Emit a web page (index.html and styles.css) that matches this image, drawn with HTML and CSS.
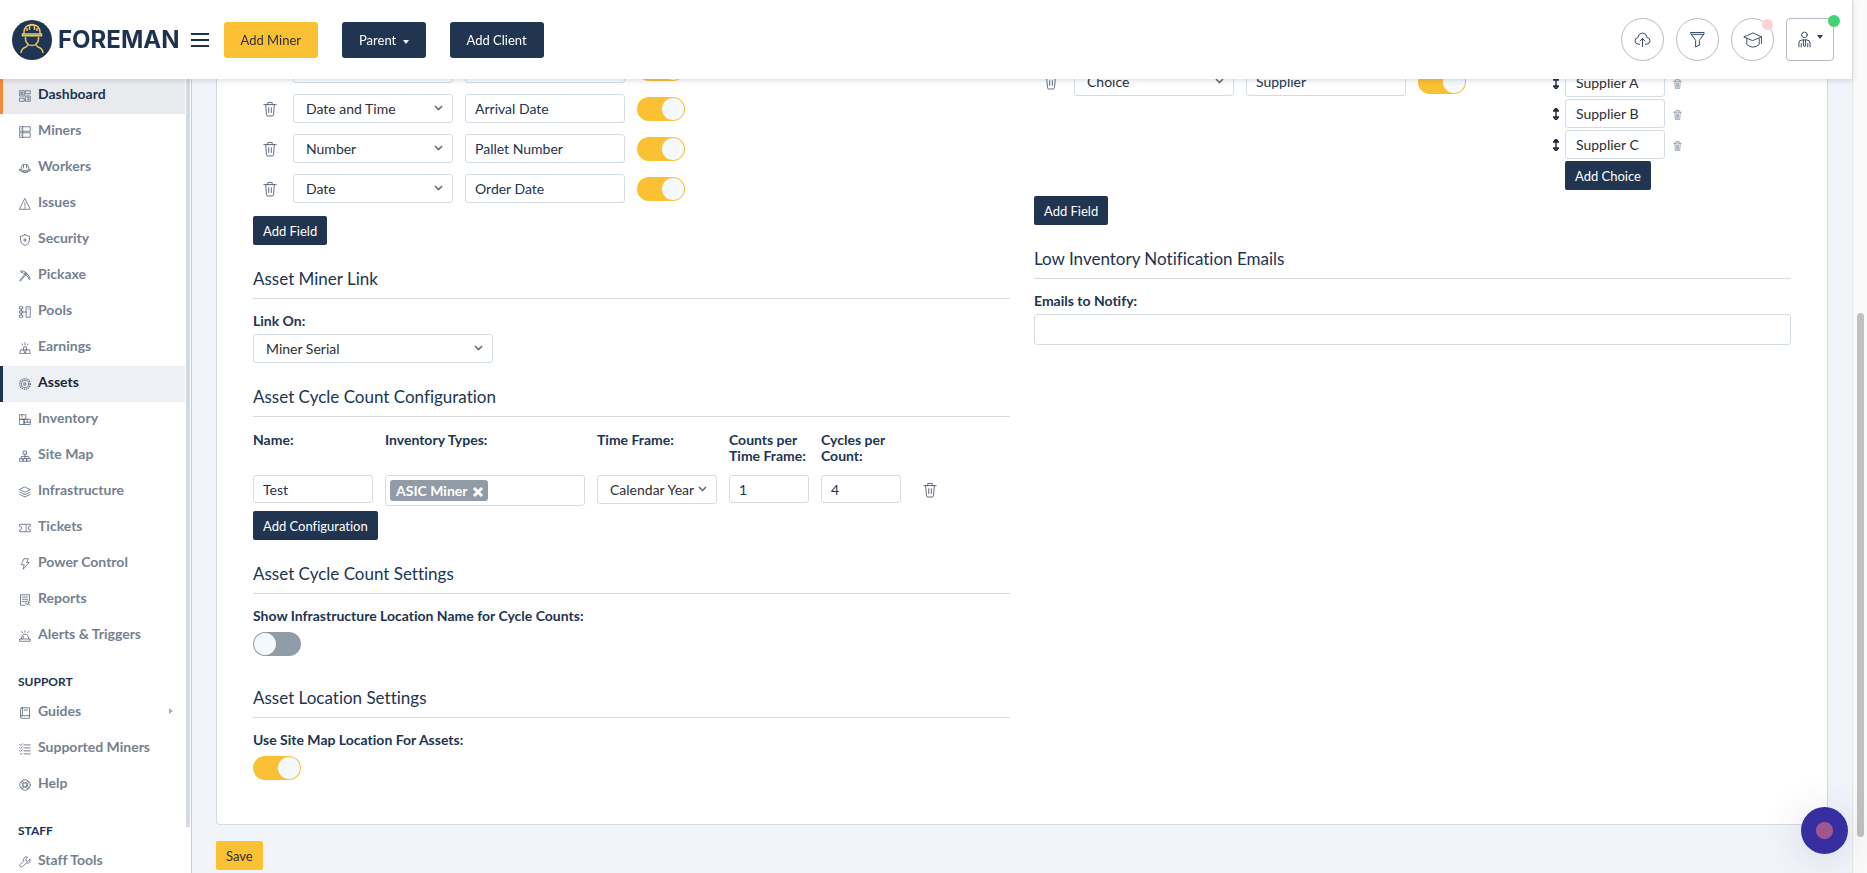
FILE: index.html
```html
<!DOCTYPE html>
<html lang="en">
<head>
    <meta charset="UTF-8">
    <meta name="viewport" content="width=device-width, initial-scale=1.0">
    <title>Foreman - Assets</title>
    <link rel="stylesheet" href="styles.css">
</head>
<body>

<!-- icon sprite -->
<svg class="sprite" aria-hidden="true">
    <symbol id="i-trash" viewBox="0 0 16 18"><path d="M1 4h14M5.5 4V1.500h5V4M3 4l1 11.500q.2 1.500 1.500 1.500h5q1.300 0 1.500-1.500L13 4M6.500 7.500v5.500M9.500 7.500v5.500"/></symbol>
    <symbol id="i-trash-sm" viewBox="0 0 16 18"><path d="M1 4h14M5 4V1h6v3M3 4l1 13h8l1-13M6 7v8M8 7v8M10 7v8"/></symbol>
    <symbol id="i-updown" viewBox="0 0 6 12"><path d="M3 2v8"/><path class="fill" d="M3 0l2.500 3h-5zM3 12l2.500-3h-5z"/></symbol>
    <symbol id="i-dashboard" viewBox="0 0 16 16"><path d="M1 1h6v7H1zM9 1h6v4H9zM9 8h6v7H9zM1 11h6v4H1zM3 3h2v3H3zM11 10h2v3h-2"/></symbol>
    <symbol id="i-miners" viewBox="0 0 16 16"><path d="M1 1h14v6H1zM1 9h14v6H1zM5 1v6M5 9v6M2.500 4h1M2.500 12h1"/></symbol>
    <symbol id="i-workers" viewBox="0 0 16 16"><path d="M3 10V8a5 5 0 0 1 10 0v2M1 10q7 3.500 14 0v1.500q-7 4-14 0zM6 4v4M10 4v4M4 13q4 3 8 0"/></symbol>
    <symbol id="i-issues" viewBox="0 0 16 16"><path d="M8 1l7 14H1zM8 6v5M8 12.500v1"/></symbol>
    <symbol id="i-security" viewBox="0 0 16 16"><path d="M8 1q3 2 6 2v5q0 5-6 7.500Q2 13 2 8V3q3 0 6-2zM8 6v4M6 8h4"/></symbol>
    <symbol id="i-pickaxe" viewBox="0 0 16 16"><path d="M3 1q8 0 12 11l-1 1Q10 5 3 3zM10 5l-8 10-1-1L9 4M8 3l5 5"/></symbol>
    <symbol id="i-pools" viewBox="0 0 16 16"><path d="M1 1h4v3H1zM1 6.500h4v3H1zM1 12h4v3H1zM10 1h5v14h-5zM12 4h1M5 8h5M3 4v2.500M3 9.500V12"/></symbol>
    <symbol id="i-earnings" viewBox="0 0 16 16"><path d="M5.500 10l1-3.500h3l1 3.500zM1 15l1-4.500h4.500l1 4.500zM8.500 15l1-4.500H14l1 4.500zM8 1v3M4 2.500l1 2M12 2.500l-1 2"/></symbol>
    <symbol id="i-assets" viewBox="0 0 16 16"><circle cx="8" cy="8" r="7" stroke-width="2" stroke-linecap="butt" stroke-dasharray="1.200 1.550"/><circle cx="8" cy="8" r="5"/><path d="M7 6.500h2v3H7z"/></symbol>
    <symbol id="i-inventory" viewBox="0 0 16 16"><path d="M1 1h8v6H1zM1 7h6v7H1zM7 7h8v7H7zM4 1v3M11 7v3M7 11h8"/></symbol>
    <symbol id="i-sitemap" viewBox="0 0 16 16"><path d="M6 1.500h4v4H6zM8 5.500v6M3 11.500V8.500h10v3M1 11.500h4V15H1zM6 11.500h4V15H6zM11 11.500h4V15h-4z"/></symbol>
    <symbol id="i-infra" viewBox="0 0 16 16"><path d="M8 1.500l7 3.300-7 3.400-7-3.400zM1 8l7 3.400L15 8M1 11.200l7 3.400 7-3.400"/></symbol>
    <symbol id="i-tickets" viewBox="0 0 16 16"><path d="M1 3h14v2.500q-2.500 0-2.500 2.500t2.500 2.500V13H1v-2.500q2.500 0 2.500-2.500T1 5.500zM9.500 4v1.500M9.500 7v2M9.500 10.500V12"/></symbol>
    <symbol id="i-power" viewBox="0 0 16 16"><path d="M7 1h5.500L10 6h3.500L5.500 15 7 9H3.500z"/></symbol>
    <symbol id="i-reports" viewBox="0 0 16 16"><path d="M14 9V1H2v14h6M4.500 4h7M4.500 7h7M4.500 10h3"/><circle cx="11" cy="11.500" r="2.200"/><path d="M12.500 13l2 2"/></symbol>
    <symbol id="i-alerts" viewBox="0 0 16 16"><path d="M3 12l1-4q1-2.500 4-2.500T12 8l1 4M1 12h14v3H1zM8 1v2M3.500 2l1.200 2M12.500 2l-1.200 2M6 8.500L5.500 11"/></symbol>
    <symbol id="i-guides" viewBox="0 0 16 16"><path d="M4 1h10v14H4q-2 0-2-2V3q0-2 2-2zM2 13q0-1.500 2-1.500h10M4.500 1v10.500M7 4h4.500"/></symbol>
    <symbol id="i-list" viewBox="0 0 16 16"><path d="M6.500 2.500H15M6.500 6.500H15M6.500 10.500H15M6.500 14.500H15M1 2l1.200 1.200L4.500 1M1 6l1.200 1.200L4.500 5M1 10l1.200 1.200L4.500 9M2 14.500h1.500"/></symbol>
    <symbol id="i-help" viewBox="0 0 16 16"><circle cx="8" cy="8" r="7"/><circle cx="8" cy="8" r="3.200"/><path d="M3 4.500L5.500 7M4.500 3L7 5.500M13 4.500L10.500 7M11.500 3L9 5.500M3 11.500L5.500 9M4.500 13L7 10.500M13 11.500L10.500 9M11.500 13L9 10.500"/></symbol>
    <symbol id="i-wrench" viewBox="0 0 16 16"><path d="M14.500 4.500L12 7 9.500 6.500 9 4l2.500-2.500Q8.500.500 6.500 3 5.500 4.500 6.200 6.500L1.500 11.500q-1 1.500.300 2.700 1.300 1 2.700 0L9.500 9.500q3 .8 4.700-1.200 1.200-1.800.3-3.800z"/></symbol>
    <symbol id="i-cloud" viewBox="0 0 18 16"><path d="M6 13H4.500Q1 12.500 1 9.500T4 6q.5-4.500 5-5 4.500.5 5 5 3 .5 3 3.500T13.500 13H12M9 15.500V7M6.500 9.500L9 7l2.500 2.500"/></symbol>
    <symbol id="i-filter" viewBox="0 0 16 18"><path d="M1 1.500h14v1.500L10 10v5l-4 2v-7L1 3zM1.500 3.500h13"/></symbol>
    <symbol id="i-cap" viewBox="0 0 22 18"><path d="M1 5.500L11 1l9.500 4.500L11 9.500zM4 7.500V14q3.500 3 7 3t7-3V7.500M20.500 5.500V13"/></symbol>
    <symbol id="i-user" viewBox="0 0 14 18"><circle cx="7" cy="4" r="3"/><path d="M1 17v-4q0-3.500 3.500-3.500h5q3.500 0 3.500 3.500v4M3.500 17v-3.500M10.500 17v-3.500M5.800 9.500v5.500L7 17l1.200-2V9.500"/></symbol>
</svg>

<header class="topbar">
    <a class="brand" href="#">
        <svg class="brand-mark" viewBox="0 0 40 40" aria-hidden="true">
            <circle cx="20" cy="20" r="20"/>
            <path d="M12 14v-2q.5-7 8-7.500 7.500.5 8 7.500v2M10.500 14h19v1.800h-19zM17.500 10V6q2.500-2 5 0v4M15 11V8M25 11V8M13.500 17q-.5 5 3 7.500 3.500 2 7 0 3.500-2.500 3-7.500M9 33q.3-4.500 5-6l2.500-2.500M31 33q-.3-4.500-5-6l-2.500-2.500"/>
        </svg>
        <span class="brand-name">FOREMAN</span>
    </a>
    <button type="button" class="menu-toggle" aria-label="Toggle menu"><span></span><span></span><span></span></button>
    <div class="topbar-actions">
        <button type="button" class="btn btn-lg btn-warning">Add Miner</button>
        <button type="button" class="btn btn-lg">Parent <span class="caret"></span></button>
        <button type="button" class="btn btn-lg">Add Client</button>
    </div>
    <div class="topbar-icons">
        <button type="button" class="round" aria-label="Upload"><svg class="icon" width="17" height="15"><use href="#i-cloud"/></svg></button>
        <button type="button" class="round" aria-label="Filter"><svg class="icon" width="15" height="17"><use href="#i-filter"/></svg></button>
        <button type="button" class="round" aria-label="Training"><svg class="icon" width="20" height="16"><use href="#i-cap"/></svg><i class="dot dot-pink"></i></button>
        <button type="button" class="round user" aria-label="Account"><svg class="icon" width="13" height="17"><use href="#i-user"/></svg><span class="caret"></span><i class="dot dot-green"></i></button>
    </div>
</header>

<div class="layout">
    <nav class="sidebar">
        <a class="nav-item current" href="#"><svg class="icon"><use href="#i-dashboard"/></svg>Dashboard</a>
        <a class="nav-item" href="#"><svg class="icon"><use href="#i-miners"/></svg>Miners</a>
        <a class="nav-item" href="#"><svg class="icon"><use href="#i-workers"/></svg>Workers</a>
        <a class="nav-item" href="#"><svg class="icon"><use href="#i-issues"/></svg>Issues</a>
        <a class="nav-item" href="#"><svg class="icon"><use href="#i-security"/></svg>Security</a>
        <a class="nav-item" href="#"><svg class="icon"><use href="#i-pickaxe"/></svg>Pickaxe</a>
        <a class="nav-item" href="#"><svg class="icon"><use href="#i-pools"/></svg>Pools</a>
        <a class="nav-item" href="#"><svg class="icon"><use href="#i-earnings"/></svg>Earnings</a>
        <a class="nav-item active" href="#"><svg class="icon"><use href="#i-assets"/></svg>Assets</a>
        <a class="nav-item" href="#"><svg class="icon"><use href="#i-inventory"/></svg>Inventory</a>
        <a class="nav-item" href="#"><svg class="icon"><use href="#i-sitemap"/></svg>Site Map</a>
        <a class="nav-item" href="#"><svg class="icon"><use href="#i-infra"/></svg>Infrastructure</a>
        <a class="nav-item" href="#"><svg class="icon"><use href="#i-tickets"/></svg>Tickets</a>
        <a class="nav-item" href="#"><svg class="icon"><use href="#i-power"/></svg>Power Control</a>
        <a class="nav-item" href="#"><svg class="icon"><use href="#i-reports"/></svg>Reports</a>
        <a class="nav-item" href="#"><svg class="icon"><use href="#i-alerts"/></svg>Alerts &amp; Triggers</a>
        <h6 class="nav-title">SUPPORT</h6>
        <a class="nav-item" href="#"><svg class="icon"><use href="#i-guides"/></svg>Guides<span class="more"></span></a>
        <a class="nav-item" href="#"><svg class="icon"><use href="#i-list"/></svg>Supported Miners</a>
        <a class="nav-item" href="#"><svg class="icon"><use href="#i-help"/></svg>Help</a>
        <h6 class="nav-title">STAFF</h6>
        <a class="nav-item" href="#"><svg class="icon"><use href="#i-wrench"/></svg>Staff Tools</a>
        <span class="sidebar-thumb"></span>
    </nav>

    <main class="content">
        <form>
            <div class="card">
                <div class="col">
                    <div class="field-row">
                        <button type="button" class="trash" aria-label="Remove field"><svg class="icon"><use href="#i-trash"/></svg></button>
                        <select class="control" aria-label="Field type"><option></option></select>
                        <input class="control" type="text" aria-label="Field name">
                        <input class="switch" type="checkbox" aria-label="Enabled" checked>
                    </div>
                    <div class="field-row">
                        <button type="button" class="trash" aria-label="Remove field"><svg class="icon"><use href="#i-trash"/></svg></button>
                        <select class="control" aria-label="Field type"><option>Date and Time</option></select>
                        <input class="control" type="text" aria-label="Field name" value="Arrival Date">
                        <input class="switch" type="checkbox" aria-label="Enabled" checked>
                    </div>
                    <div class="field-row">
                        <button type="button" class="trash" aria-label="Remove field"><svg class="icon"><use href="#i-trash"/></svg></button>
                        <select class="control" aria-label="Field type"><option>Number</option></select>
                        <input class="control" type="text" aria-label="Field name" value="Pallet Number">
                        <input class="switch" type="checkbox" aria-label="Enabled" checked>
                    </div>
                    <div class="field-row">
                        <button type="button" class="trash" aria-label="Remove field"><svg class="icon"><use href="#i-trash"/></svg></button>
                        <select class="control" aria-label="Field type"><option>Date</option></select>
                        <input class="control" type="text" aria-label="Field name" value="Order Date">
                        <input class="switch" type="checkbox" aria-label="Enabled" checked>
                    </div>
                    <button type="button" class="btn">Add Field</button>

                    <h4>Asset Miner Link</h4>
                    <label for="linkOn">Link On:</label>
                    <select class="control link-on" id="linkOn"><option>Miner Serial</option></select>

                    <h4>Asset Cycle Count Configuration</h4>
                    <div class="cycle-grid">
                        <label for="cfgName">Name:</label>
                        <label for="cfgTypes">Inventory Types:</label>
                        <label for="cfgFrame">Time Frame:</label>
                        <label for="cfgCounts">Counts per Time Frame:</label>
                        <label for="cfgCycles">Cycles per Count:</label>
                        <span></span>
                        <input class="control short" type="text" id="cfgName" value="Test">
                        <div class="control tags">
                            <span class="tag">ASIC Miner <button type="button" aria-label="Remove ASIC Miner"><svg viewBox="0 0 12 12"><path d="M2 2l8 8M10 2l-8 8"/></svg></button></span>
                            <input type="text" id="cfgTypes">
                        </div>
                        <select class="control" id="cfgFrame"><option>Calendar Year</option></select>
                        <input class="control short" type="text" id="cfgCounts" value="1">
                        <input class="control short" type="text" id="cfgCycles" value="4">
                        <button type="button" class="trash" aria-label="Remove configuration"><svg class="icon"><use href="#i-trash"/></svg></button>
                    </div>
                    <button type="button" class="btn">Add Configuration</button>

                    <h4>Asset Cycle Count Settings</h4>
                    <label for="showInfra">Show Infrastructure Location Name for Cycle Counts:</label>
                    <input class="switch setting" type="checkbox" id="showInfra">

                    <h4>Asset Location Settings</h4>
                    <label for="useSiteMap">Use Site Map Location For Assets:</label>
                    <input class="switch setting" type="checkbox" id="useSiteMap" checked>
                </div>

                <div class="col col-right">
                    <div class="field-row with-choices">
                        <button type="button" class="trash" aria-label="Remove field"><svg class="icon"><use href="#i-trash"/></svg></button>
                        <select class="control" aria-label="Field type"><option>Choice</option></select>
                        <input class="control" type="text" aria-label="Field name" value="Supplier">
                        <input class="switch" type="checkbox" aria-label="Enabled" checked>
                        <div class="choices">
                            <div class="choice">
                                <svg class="icon updown"><use href="#i-updown"/></svg>
                                <input class="control" type="text" aria-label="Choice" value="Supplier A">
                                <button type="button" class="trash-sm" aria-label="Remove choice"><svg class="icon"><use href="#i-trash-sm"/></svg></button>
                            </div>
                            <div class="choice">
                                <svg class="icon updown"><use href="#i-updown"/></svg>
                                <input class="control" type="text" aria-label="Choice" value="Supplier B">
                                <button type="button" class="trash-sm" aria-label="Remove choice"><svg class="icon"><use href="#i-trash-sm"/></svg></button>
                            </div>
                            <div class="choice">
                                <svg class="icon updown"><use href="#i-updown"/></svg>
                                <input class="control" type="text" aria-label="Choice" value="Supplier C">
                                <button type="button" class="trash-sm" aria-label="Remove choice"><svg class="icon"><use href="#i-trash-sm"/></svg></button>
                            </div>
                            <button type="button" class="btn">Add Choice</button>
                        </div>
                    </div>
                    <button type="button" class="btn">Add Field</button>

                    <h4>Low Inventory Notification Emails</h4>
                    <label for="emails">Emails to Notify:</label>
                    <input class="control emails" type="text" id="emails">
                </div>
            </div>
            <button type="submit" class="btn btn-warning">Save</button>
        </form>
    </main>

    <div class="rail"><span class="rail-thumb"></span></div>
</div>

<button type="button" class="chat" aria-label="Open chat"></button>
</body>
</html>
```

FILE: styles.css
```css
* {
    box-sizing: border-box;
}
body {
    margin: 0;
    background: #f1f4f9;
    color: #213450;
    font-family: Lato, "Open Sans", sans-serif;
    font-size: 14px;
    line-height: 20px;
    font-variant-ligatures: none;
}
button, input, select {
    font: inherit;
    margin: 0;
}
button {
    cursor: pointer;
}
.sprite {
    display: none;
}
.icon {
    fill: none;
    stroke: currentColor;
    stroke-width: 1;
    stroke-linejoin: round;
    stroke-linecap: round;
}
.icon .fill {
    fill: currentColor;
    stroke: none;
}

/* top bar */
.topbar {
    position: fixed;
    top: 0;
    left: 0;
    right: 15px;
    z-index: 10;
    height: 79px;
    padding: 0 18px 0 12px;
    display: flex;
    align-items: center;
    background: #fff;
    box-shadow: 0 1px 6px rgba(40, 50, 70, 0.2);
}
.brand {
    display: flex;
    align-items: center;
    gap: 6px;
    color: #1e3250;
    text-decoration: none;
}
.brand-mark {
    width: 40px;
    height: 40px;
    fill: none;
    stroke: #f0c862;
    stroke-width: 1.4;
}
.brand-mark circle {
    fill: #1f3554;
    stroke: none;
}
.brand-name {
    font-family: Inter, sans-serif;
    font-size: 24px;
    font-weight: 700;
    line-height: 28px;
}
.menu-toggle {
    display: flex;
    flex-direction: column;
    gap: 4px;
    width: 18px;
    margin: 0 15px 0 11px;
    padding: 0;
    border: 0;
    background: none;
}
.menu-toggle span {
    height: 2px;
    background: #1e3250;
}
.topbar-actions {
    display: flex;
    gap: 24px;
}
.topbar-icons {
    display: flex;
    gap: 12px;
    margin-left: auto;
}
.round {
    position: relative;
    display: flex;
    align-items: center;
    justify-content: center;
    width: 43px;
    height: 43px;
    padding: 0;
    border: 1px solid #b4bac3;
    border-radius: 50%;
    background: #fff;
    color: #2c3d57;
}
.user {
    width: 48px;
    border-radius: 4px;
    gap: 6px;
}
.dot {
    position: absolute;
    border-radius: 50%;
}
.dot-pink {
    top: 0;
    right: 0;
    width: 11px;
    height: 11px;
    background: #fbd3d6;
}
.dot-green {
    top: -4px;
    right: -7px;
    width: 12px;
    height: 12px;
    background: #43d477;
}
.caret {
    display: inline-block;
    margin-left: 3px;
    border: 3px solid transparent;
    border-top: 4px solid currentColor;
    border-bottom: 0;
    vertical-align: 1px;
}
.user .caret {
    margin: 0 0 6px;
}

/* buttons */
.btn {
    display: block;
    height: 29px;
    padding: 0 10px;
    border: 0;
    border-radius: 2px;
    background: #213450;
    color: #fff;
    font-size: 13px;
    white-space: nowrap;
}
.btn-lg {
    height: 36px;
    padding: 0 17px;
    border-radius: 3px;
}
.btn-warning {
    background: #fbc134;
    color: #2f2f33;
}

/* side bar */
.layout {
    display: flex;
    min-height: 100vh;
}
.sidebar {
    position: sticky;
    top: 0;
    flex: 0 0 192px;
    height: 100vh;
    padding-top: 78px;
    padding-right: 6px;
    border-right: 1px solid #c5cdd6;
    background: #fff;
    overflow: hidden;
}
.nav-item {
    display: flex;
    align-items: center;
    gap: 7px;
    height: 36px;
    padding: 0 12px 4px 16px;
    border-left: 3px solid transparent;
    color: #76808f;
    font-weight: 700;
    text-decoration: none;
}
.nav-item .icon {
    width: 12px;
    height: 12px;
    margin-top: 4px;
    color: #4f5c73;
}
.nav-item.current {
    border-left-color: #f5893b;
    background: #e9eaee;
    color: #213450;
}
.nav-item.active {
    border-left-color: #213450;
    background: #edf1f5;
    color: #1c2430;
}
.nav-title {
    height: 41px;
    margin: 0;
    padding: 18px 0 0 18px;
    font-size: 12px;
    font-weight: 700;
}
.more {
    margin-left: auto;
    border: 3px solid transparent;
    border-left: 4px solid #a9b0ba;
    border-right: 0;
}
.sidebar-thumb {
    position: absolute;
    top: 79px;
    right: 1px;
    bottom: 46px;
    width: 4px;
    background: #d3dae1;
}

/* content */
.content {
    flex: 1;
    min-width: 0;
    padding: 0 24px 2px;
}
.card {
    display: grid;
    grid-template-columns: 1fr 1fr;
    gap: 24px;
    margin-bottom: 16px;
    padding: 54px 36px 14px;
    border: 1px solid #d3dae3;
    border-top: 0;
    border-radius: 0 0 4px 4px;
    background: #fff;
}
.col-right {
    padding-top: 13px;
}
h4 {
    margin: 22px 0 12px;
    padding-bottom: 7px;
    border-bottom: 1px solid #d6dde2;
    font-size: 17px;
    font-weight: 400;
    line-height: 24px;
}
label {
    display: block;
    margin-bottom: 3px;
    font-weight: 700;
}
.control {
    display: block;
    width: 100%;
    height: 29px;
    padding: 0 9px;
    border: 1px solid #d3dde3;
    border-radius: 3px;
    background: #fff;
    color: #213450;
}
select.control {
    appearance: none;
    padding-left: 12px;
    background: #fff url("data:image/svg+xml,%3Csvg xmlns='http://www.w3.org/2000/svg' width='9' height='7'%3E%3Cpath d='M1 1l3.500 3.500L8 1' fill='none' stroke='%23666e78' stroke-width='1.600'/%3E%3C/svg%3E") no-repeat right 9px top 10px;
    color: #2d2f36;
}
.control.short {
    height: 28px;
}
.control.link-on {
    width: 240px;
}
.control.emails {
    height: 31px;
}
.field-row {
    display: grid;
    grid-template-columns: 18px 160px 160px 48px;
    gap: 12px;
    align-items: center;
    margin-bottom: 11px;
    padding-left: 10px;
}
.field-row + .btn {
    margin-top: 13px;
}
.with-choices {
    grid-template-columns: 18px 160px 160px 122px auto;
    align-items: start;
    margin-bottom: 6px;
}
.with-choices + .btn {
    margin-top: 0;
}
.trash {
    display: flex;
    align-items: center;
    width: 14px;
    height: 29px;
    padding: 0;
    border: 0;
    background: none;
    color: #4b5870;
}
.trash .icon {
    width: 14px;
    height: 16px;
}
.switch {
    appearance: none;
    display: block;
    width: 48px;
    height: 24px;
    padding: 1px;
    border-radius: 12px;
    background: #919ca9;
    cursor: pointer;
}
.switch::before {
    content: "";
    display: block;
    width: 22px;
    height: 22px;
    border-radius: 50%;
    background: #f4f9fd;
}
.switch:checked {
    background: #fbc134;
}
.switch:checked::before {
    margin-left: auto;
}
.with-choices .switch {
    margin-top: 3px;
}
.setting {
    margin: 6px 0 30px;
}

.choices {
    padding-top: 1px;
}
.choices .btn {
    margin-left: 13px;
}
.choice {
    display: flex;
    align-items: center;
    margin-bottom: 2px;
}
.choice .control {
    width: 100px;
    padding: 0 10px;
    color: #2d2f36;
}
.updown {
    width: 6px;
    height: 12px;
    margin: 0 6px 0 1px;
    color: #1c2838;
    stroke-width: 1.4;
}
.trash-sm {
    display: flex;
    padding: 3px 0 0;
    margin-left: 8px;
    border: 0;
    background: none;
    color: #6a7588;
}
.trash-sm .icon {
    width: 9px;
    height: 10px;
}

.cycle-grid {
    display: grid;
    grid-template-columns: 120px 200px 120px 80px 80px 30px;
    column-gap: 12px;
    align-items: start;
    padding-top: 3px;
    margin-bottom: 5px;
}
.cycle-grid label {
    margin-bottom: 11px;
    line-height: 16px;
}
.cycle-grid .trash {
    margin-left: 10px;
}
.tags {
    display: flex;
    align-items: center;
    height: 31px;
    padding: 0 4px;
}
.tags input {
    flex: 1;
    min-width: 0;
    height: 24px;
    padding: 0 4px;
    border: 0;
    outline: 0;
    background: none;
}
.tag {
    display: flex;
    align-items: center;
    gap: 4px;
    height: 21px;
    padding: 0 4px 0 6px;
    border-radius: 3px;
    background: #919ca6;
    color: #fff;
    font-weight: 700;
    white-space: nowrap;
}
.tag button {
    display: flex;
    padding: 3px 0 0;
    border: 0;
    background: none;
}
.tag svg {
    width: 12px;
    height: 12px;
    stroke: #fff;
    stroke-width: 3;
}

/* page scroll rail */
.rail {
    position: sticky;
    top: 0;
    flex: 0 0 15px;
    height: 100vh;
    padding: 313px 3px 36px 4px;
    border-left: 1px solid #e6e8ea;
    background: #fafafa;
}
.rail-thumb {
    display: block;
    height: 100%;
    border-radius: 4px;
    background: #c1c1c1;
}

.chat {
    position: fixed;
    right: 19px;
    bottom: 19px;
    z-index: 5;
    width: 47px;
    height: 47px;
    border: 0;
    border-radius: 50%;
    background: radial-gradient(circle, #a0568f 8px, #372ea0 9px);
    box-shadow: 0 4px 40px rgba(60, 60, 120, 0.16);
}
```
